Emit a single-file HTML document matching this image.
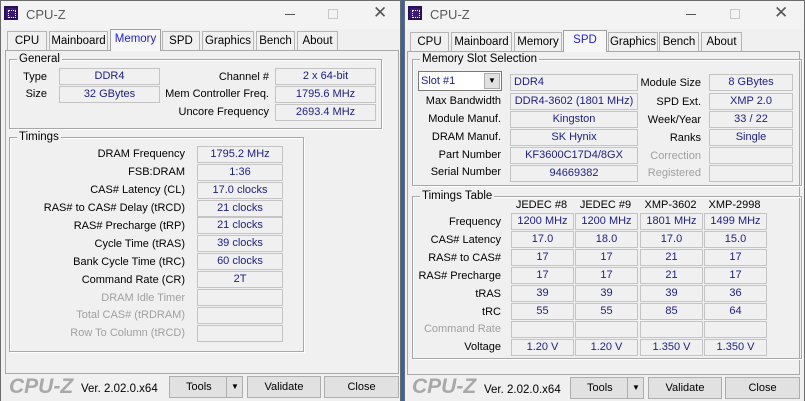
<!DOCTYPE html>
<html><head><meta charset="utf-8"><style>
*{box-sizing:border-box;margin:0;padding:0}
body{width:805px;height:401px;overflow:hidden;background:#2f64b0;font-family:"Liberation Sans",sans-serif;font-size:11px;color:#000;position:relative}
.a{position:absolute}
.win{position:absolute;top:0;height:401px;background:#f0f0f0;border:1px solid #6b6b6b;border-bottom:none}
.title{position:absolute;left:0;top:0;right:0;height:28px;background:#f3f3f3}
.ico{position:absolute;left:3px;top:5px;width:14px;height:14px;background:#3c1a78;border:2px solid #2a0f5c}
.ico:after{content:"";position:absolute;left:2px;top:2px;width:6px;height:6px;border:1px dotted #fff;border-radius:1px}
.tt{position:absolute;left:25px;top:6px;font-size:13px;color:#5a5a5a}
.tab{position:absolute;top:30px;height:20px;border:1px solid #b5b5b5;border-bottom:none;background:#f0f0f0;text-align:center;line-height:18px;font-size:11.5px}
.tab.sel{top:28px;height:22px;color:#1e1ee0;background:#f7f7f7;z-index:2;border-color:#a0a0a0}
.panel{position:absolute;left:4px;top:49px;border:1px solid #a8a8a8;background:#f0f0f0}
.grp{position:absolute;border:1px solid #a8a8a8;box-shadow:1px 1px 0 #fff inset,1px 1px 0 #fff}
.leg{position:absolute;top:-8px;left:7px;background:#f0f0f0;padding:0 2px;line-height:14px;font-size:11.5px}
.f{position:absolute;height:17px;border:1px solid #c4c4c4;background:#f0f0f0;color:#1c1c8c;text-align:center;line-height:15px;white-space:nowrap}
.l{position:absolute;text-align:right;white-space:nowrap;line-height:16px}
.g{color:#a0a0a0}
.btn{position:absolute;top:375px;height:22px;border:1px solid #adadad;background:#e1e1e1;text-align:center;line-height:20px}
.logo{position:absolute;top:374px;font-size:21px;font-weight:bold;font-style:italic;color:#a8a8a8}
.ver{position:absolute;top:382px;font-size:11.5px}
.ctl{position:absolute;top:6px;color:#555}
</style></head><body>

<!-- LEFT WINDOW -->
<div class="win" style="left:0;width:401px">
 <div class="title"><div class="ico"></div><div class="tt">CPU-Z</div>
  <div class="a" style="left:284px;top:13px;width:10px;height:1px;background:#555"></div>
  <div class="a" style="left:327px;top:8px;width:10px;height:10px;border:1px solid #c8c8c8"></div>
  <div class="ctl" style="left:372px;top:2px;font-size:17px;font-weight:300">✕</div>
 </div>
 <div class="tab" style="left:6px;width:40px">CPU</div>
 <div class="tab" style="left:48px;width:59px">Mainboard</div>
 <div class="tab sel" style="left:109px;width:51px">Memory</div>
 <div class="tab" style="left:161px;width:38px">SPD</div>
 <div class="tab" style="left:201px;width:52px">Graphics</div>
 <div class="tab" style="left:255px;width:39px">Bench</div>
 <div class="tab" style="left:296px;width:41px">About</div>
 <div class="panel" style="width:394px;height:324px"></div>
 <div class="grp" style="left:8px;top:58px;width:373px;height:70px"><div class="leg">General</div></div>
 <div class="l" style="left:10px;top:68px;width:36px">Type</div><div class="f" style="left:58px;top:67px;width:101px">DDR4</div>
 <div class="l" style="left:10px;top:85px;width:36px">Size</div><div class="f" style="left:58px;top:85px;width:101px">32 GBytes</div>
 <div class="l" style="left:160px;top:68px;width:108px">Channel #</div><div class="f" style="left:274px;top:67px;width:101px">2 x 64-bit</div>
 <div class="l" style="left:150px;top:85px;width:118px">Mem Controller Freq.</div><div class="f" style="left:274px;top:85px;width:101px">1795.6 MHz</div>
 <div class="l" style="left:150px;top:103px;width:118px">Uncore Frequency</div><div class="f" style="left:274px;top:103px;width:101px">2693.4 MHz</div>

 <div class="grp" style="left:8px;top:136px;width:295px;height:215px"><div class="leg">Timings</div></div>
 <div class="l" style="left:10px;top:145px;width:174px">DRAM Frequency</div><div class="f" style="left:196px;top:145px;width:86px">1795.2 MHz</div>
 <div class="l" style="left:10px;top:163px;width:174px">FSB:DRAM</div><div class="f" style="left:196px;top:163px;width:86px">1:36</div>
 <div class="l" style="left:10px;top:181px;width:174px">CAS# Latency (CL)</div><div class="f" style="left:196px;top:181px;width:86px">17.0 clocks</div>
 <div class="l" style="left:10px;top:199px;width:174px">RAS# to CAS# Delay (tRCD)</div><div class="f" style="left:196px;top:199px;width:86px">21 clocks</div>
 <div class="l" style="left:10px;top:217px;width:174px">RAS# Precharge (tRP)</div><div class="f" style="left:196px;top:216px;width:86px">21 clocks</div>
 <div class="l" style="left:10px;top:235px;width:174px">Cycle Time (tRAS)</div><div class="f" style="left:196px;top:234px;width:86px">39 clocks</div>
 <div class="l" style="left:10px;top:253px;width:174px">Bank Cycle Time (tRC)</div><div class="f" style="left:196px;top:252px;width:86px">60 clocks</div>
 <div class="l" style="left:10px;top:271px;width:174px">Command Rate (CR)</div><div class="f" style="left:196px;top:270px;width:86px">2T</div>
 <div class="l g" style="left:10px;top:289px;width:174px">DRAM Idle Timer</div><div class="f" style="left:196px;top:288px;width:86px"></div>
 <div class="l g" style="left:10px;top:306px;width:174px">Total CAS# (tRDRAM)</div><div class="f" style="left:196px;top:306px;width:86px"></div>
 <div class="l g" style="left:10px;top:324px;width:174px">Row To Column (tRCD)</div><div class="f" style="left:196px;top:324px;width:86px"></div>

 <div class="logo" style="left:8px">CPU-Z</div>
 <div class="ver" style="left:80px">Ver. 2.02.0.x64</div>
 <div class="btn" style="left:168px;width:74px"><span style="position:absolute;left:16px">Tools</span><span style="position:absolute;left:56px;top:0;height:20px;border-left:1px solid #adadad;width:17px;font-size:8px">▼</span></div>
 <div class="btn" style="left:246px;width:74px">Validate</div>
 <div class="btn" style="left:323px;width:75px">Close</div>
</div>

<!-- RIGHT WINDOW -->
<div class="win" style="left:404px;width:401px">
 <div class="title"><div class="ico"></div><div class="tt">CPU-Z</div>
  <div class="a" style="left:281px;top:13px;width:10px;height:1px;background:#555"></div>
  <div class="a" style="left:325px;top:8px;width:10px;height:10px;border:1px solid #c8c8c8"></div>
  <div class="ctl" style="left:369px;top:2px;font-size:17px">✕</div>
 </div>
 <div class="tab" style="left:5px;width:39px;top:31px">CPU</div>
 <div class="tab" style="left:46px;width:61px;top:31px">Mainboard</div>
 <div class="tab" style="left:109px;width:48px;top:31px">Memory</div>
 <div class="tab sel" style="left:158px;width:44px;top:29px">SPD</div>
 <div class="tab" style="left:203px;width:50px;top:31px">Graphics</div>
 <div class="tab" style="left:254px;width:40px;top:31px">Bench</div>
 <div class="tab" style="left:296px;width:41px;top:31px">About</div>
 <div class="panel" style="left:2px;top:50px;width:393px;height:324px"></div>
 <div class="grp" style="left:7px;top:58px;width:390px;height:127px"><div class="leg">Memory Slot Selection</div></div>
 <div class="a" style="left:13px;top:70px;width:84px;height:20px;border:1px solid #7a7a7a;background:#fff;line-height:18px;padding-left:2px;color:#1c1c8c">Slot #1<span style="position:absolute;right:1px;top:1px;width:16px;height:16px;background:#e1e1e1;border:1px solid #adadad;font-size:8px;text-align:center;line-height:14px;color:#000">▼</span></div>
 <div class="f" style="left:105px;top:73px;width:128px;text-align:left;padding-left:3px">DDR4</div>
 <div class="l" style="left:10px;top:92px;width:86px">Max Bandwidth</div><div class="f" style="left:105px;top:92px;width:128px">DDR4-3602 (1801 MHz)</div>
 <div class="l" style="left:10px;top:110px;width:86px">Module Manuf.</div><div class="f" style="left:105px;top:110px;width:128px">Kingston</div>
 <div class="l" style="left:10px;top:128px;width:86px">DRAM Manuf.</div><div class="f" style="left:105px;top:128px;width:128px">SK Hynix</div>
 <div class="l" style="left:10px;top:146px;width:86px">Part Number</div><div class="f" style="left:105px;top:146px;width:128px">KF3600C17D4/8GX</div>
 <div class="l" style="left:10px;top:163px;width:86px">Serial Number</div><div class="f" style="left:105px;top:164px;width:128px">94669382</div>
 <div class="l" style="left:230px;top:74px;width:66px">Module Size</div><div class="f" style="left:304px;top:73px;width:84px">8 GBytes</div>
 <div class="l" style="left:230px;top:93px;width:66px">SPD Ext.</div><div class="f" style="left:304px;top:92px;width:84px">XMP 2.0</div>
 <div class="l" style="left:230px;top:111px;width:66px">Week/Year</div><div class="f" style="left:304px;top:110px;width:84px">33 / 22</div>
 <div class="l" style="left:230px;top:129px;width:66px">Ranks</div><div class="f" style="left:304px;top:128px;width:84px">Single</div>
 <div class="l g" style="left:230px;top:147px;width:66px">Correction</div><div class="f" style="left:304px;top:146px;width:84px"></div>
 <div class="l g" style="left:230px;top:164px;width:66px">Registered</div><div class="f" style="left:304px;top:164px;width:84px"></div>

 <div class="grp" style="left:7px;top:195px;width:390px;height:163px"><div class="leg">Timings Table</div></div>
 <div class="a" style="left:105px;top:198px;width:63px;text-align:center">JEDEC #8</div>
 <div class="a" style="left:169px;top:198px;width:63px;text-align:center">JEDEC #9</div>
 <div class="a" style="left:234px;top:198px;width:63px;text-align:center">XMP-3602</div>
 <div class="a" style="left:298px;top:198px;width:63px;text-align:center">XMP-2998</div>

 <div class="l" style="left:0;top:213px;width:96px">Frequency</div>
 <div class="f" style="left:106px;top:212px;width:63px">1200 MHz</div><div class="f" style="left:170px;top:212px;width:63px">1200 MHz</div><div class="f" style="left:235px;top:212px;width:63px">1801 MHz</div><div class="f" style="left:299px;top:212px;width:63px">1499 MHz</div>
 <div class="l" style="left:0;top:231px;width:96px">CAS# Latency</div>
 <div class="f" style="left:106px;top:230px;width:63px">17.0</div><div class="f" style="left:170px;top:230px;width:63px">18.0</div><div class="f" style="left:235px;top:230px;width:63px">17.0</div><div class="f" style="left:299px;top:230px;width:63px">15.0</div>
 <div class="l" style="left:0;top:249px;width:96px">RAS# to CAS#</div>
 <div class="f" style="left:106px;top:248px;width:63px">17</div><div class="f" style="left:170px;top:248px;width:63px">17</div><div class="f" style="left:235px;top:248px;width:63px">21</div><div class="f" style="left:299px;top:248px;width:63px">17</div>
 <div class="l" style="left:0;top:267px;width:96px">RAS# Precharge</div>
 <div class="f" style="left:106px;top:266px;width:63px">17</div><div class="f" style="left:170px;top:266px;width:63px">17</div><div class="f" style="left:235px;top:266px;width:63px">21</div><div class="f" style="left:299px;top:266px;width:63px">17</div>
 <div class="l" style="left:0;top:285px;width:96px">tRAS</div>
 <div class="f" style="left:106px;top:284px;width:63px">39</div><div class="f" style="left:170px;top:284px;width:63px">39</div><div class="f" style="left:235px;top:284px;width:63px">39</div><div class="f" style="left:299px;top:284px;width:63px">36</div>
 <div class="l" style="left:0;top:303px;width:96px">tRC</div>
 <div class="f" style="left:106px;top:302px;width:63px">55</div><div class="f" style="left:170px;top:302px;width:63px">55</div><div class="f" style="left:235px;top:302px;width:63px">85</div><div class="f" style="left:299px;top:302px;width:63px">64</div>
 <div class="l g" style="left:0;top:320px;width:96px">Command Rate</div>
 <div class="f" style="left:106px;top:320px;width:63px"></div><div class="f" style="left:170px;top:320px;width:63px"></div><div class="f" style="left:235px;top:320px;width:63px"></div><div class="f" style="left:299px;top:320px;width:63px"></div>
 <div class="l" style="left:0;top:338px;width:96px">Voltage</div>
 <div class="f" style="left:106px;top:338px;width:63px">1.20 V</div><div class="f" style="left:170px;top:338px;width:63px">1.20 V</div><div class="f" style="left:235px;top:338px;width:63px">1.350 V</div><div class="f" style="left:299px;top:338px;width:63px">1.350 V</div>

 <div class="logo" style="left:7px">CPU-Z</div>
 <div class="ver" style="left:79px;top:383px">Ver. 2.02.0.x64</div>
 <div class="btn" style="left:165px;width:74px;top:376px"><span style="position:absolute;left:16px">Tools</span><span style="position:absolute;left:56px;top:0;height:20px;border-left:1px solid #adadad;width:17px;font-size:8px">▼</span></div>
 <div class="btn" style="left:243px;width:74px;top:376px">Validate</div>
 <div class="btn" style="left:320px;width:75px;top:376px">Close</div>
</div>
</body></html>
